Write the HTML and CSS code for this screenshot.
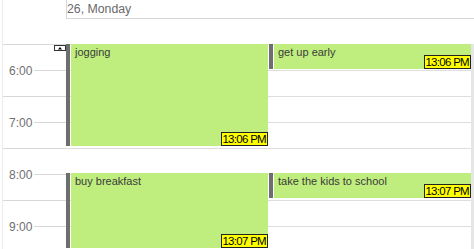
FILE: index.html
```html
<!DOCTYPE html>
<html>
<head>
<meta charset="utf-8">
<link rel="stylesheet" href="styles.css">
</head>
<body>
<div class="cal">
  <div class="inner">
    <div class="header">
      <div class="header-spacer"></div>
      <div class="header-day">26, Monday</div>
    </div>
    <div class="gap"></div>
    <div class="body">
      <div class="times">
        <div class="collapse">
          <svg width="12" height="6" viewBox="0 0 12 6"><rect x="0.5" y="0.5" width="11" height="5" fill="#fff" stroke="#333"/><path d="M4 4.5 L6 2 L8 4.5 Z" fill="#000"/></svg>
        </div>
        <div class="hour"><span class="lbl">6:00</span><span class="tick"></span></div>
        <div class="hour"><span class="lbl">7:00</span><span class="tick"></span></div>
        <div class="hour"><span class="lbl">8:00</span><span class="tick"></span></div>
        <div class="hour"><span class="lbl">9:00</span><span class="tick"></span></div>
      </div>
      <div class="days">
        <div class="slot"></div>
        <div class="slot"></div>
        <div class="slot"></div>
        <div class="slot"></div>
        <div class="slot"></div>
        <div class="slot"></div>
        <div class="slot"></div>
        <div class="slot"></div>

        <div class="event ev-jog">
          <div class="bar"></div>
          <div class="content"><span class="title">jogging</span><span class="stamp">13:06 PM</span></div>
        </div>
        <div class="event ev-up">
          <div class="bar"></div>
          <div class="content"><span class="title">get up early</span><span class="stamp">13:06 PM</span></div>
        </div>
        <div class="event ev-bf">
          <div class="bar"></div>
          <div class="content"><span class="title">buy breakfast</span><span class="stamp">13:07 PM</span></div>
        </div>
        <div class="event ev-kids">
          <div class="bar"></div>
          <div class="content"><span class="title">take the kids to school</span><span class="stamp">13:07 PM</span></div>
        </div>
      </div>
    </div>
  </div>
</div>
</body>
</html>
```

FILE: styles.css
```css
html, body {
  margin: 0;
  padding: 0;
  background: #fff;
}

.cal {
  width: 474px;
  height: 249px;
  overflow: hidden;
  padding-left: 2px;
  box-sizing: border-box;
  font-family: "Liberation Sans", Arial, sans-serif;
}

.inner {
  height: 100%;
  border-left: 1px solid #ececec;
  display: flex;
  flex-direction: column;
}

.header {
  display: flex;
  height: 19px;
  flex: none;
}

.header-spacer {
  width: 63px;
  flex: none;
}

.header-day {
  flex: 1;
  border-left: 1px solid #d6d6d6;
  border-bottom: 1px solid #d6d6d6;
  font-size: 12.3px;
  line-height: 18px;
  color: #6a6a6a;
  padding-left: 0;
}

.gap {
  height: 25px;
  flex: none;
}

.body {
  flex: 1;
  display: flex;
}

.times {
  width: 63px;
  flex: none;
  position: relative;
}

.collapse {
  position: absolute;
  right: 0;
  top: 1px;
  line-height: 0;
}

.hour {
  height: 52px;
  box-sizing: border-box;
  border-top: 1px solid #d8d8d8;
  display: flex;
  align-items: center;
}

.lbl {
  font-size: 12px;
  color: #707070;
  padding-left: 6px;
  line-height: 14px;
}

.tick {
  flex: 1;
  height: 1px;
  background: #d8d8d8;
  margin-left: 2px;
}

.days {
  flex: 1;
  position: relative;
  border-right: 3px solid #e6e6e6;
}

.slot {
  height: 26px;
  box-sizing: border-box;
  border-top: 1px solid #dedede;
}

.event {
  position: absolute;
  width: 202px;
  display: flex;
}

.bar {
  width: 4px;
  flex: none;
  background: #6e6e6e;
}

.content {
  flex: 1;
  margin-left: 1px;
  background: #bfee7e;
  position: relative;
}

.title {
  display: block;
  font-size: 11px;
  line-height: 13px;
  color: #3a3a3a;
  padding: 2px 0 0 4px;
}

.stamp {
  position: absolute;
  right: 0;
  bottom: 0;
  background: #ffff00;
  border: 1px solid #222;
  font-size: 11.5px;
  letter-spacing: -0.7px;
  line-height: 12px;
  color: #000;
  padding: 0 1px 0 0;
  white-space: nowrap;
}

.ev-jog {
  left: 0;
  top: 0;
  height: 102px;
}

.ev-up {
  left: 203px;
  top: 0;
  height: 25px;
}

.ev-bf {
  left: 0;
  top: 129px;
  height: 75px;
}

.ev-kids {
  left: 203px;
  top: 129px;
  height: 25px;
}
```
